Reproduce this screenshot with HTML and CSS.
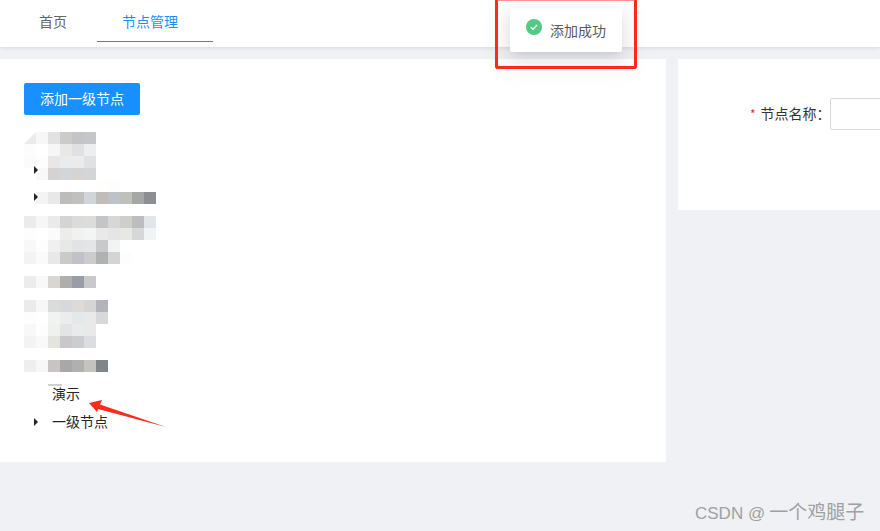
FILE: index.html
```html
<html>
  <head>
    <title>节点管理</title>
    <link rel="stylesheet" href="styles.css">
  </head>

  <body>
    <div class="nav">
      <a class="tab">首页</a>
      <a class="tab active">节点管理</a>
    </div>

    <div class="main">
      <div class="panel tree-panel">
        <button class="add-btn">添加一级节点</button>

        <div class="tree">
          <div id="mosaic" class="mosaic">
            <i class="corner-cut"></i>
            <i class="caret caret-one"></i>
            <i class="caret caret-two"></i>
          </div>
          <div class="node first-node">
            <i class="sliver"></i>
            演示
          </div>
          <div class="node">
            <i class="caret caret-node"></i>
            一级节点
          </div>
        </div>
      </div>

      <div class="panel form-panel">
        <label class="form-label"><span class="star">*</span>节点名称：</label>
        <input class="form-input" type="text">
      </div>
    </div>

    <div class="toast">
      <svg class="toast-icon" viewBox="0 0 16 16">
        <circle cx="8" cy="8" r="8" fill="#52c985"></circle>
        <path d="M4.8 8.2 7 10.3 11.2 5.9" fill="none" stroke="#fff" stroke-width="1.3"></path>
      </svg>
      <span class="toast-text">添加成功</span>
    </div>

    <!-- hand drawn marks on the screenshot -->
    <div class="red-box"></div>
    <svg class="red-arrow" viewBox="0 0 880 531">
      <polygon points="89,403 102,400 100,404.5 166,427 98,409 97,412" fill="#ff2a1a"></polygon>
    </svg>

    <div class="watermark">CSDN @<span class="watermark-name">一个鸡腿子</span></div>

    <script src="mosaic.js"></script>
  </body>
</html>
```

FILE: styles.css
```css
* {
  box-sizing: border-box;
}

html, body {
  height: 100%;
}

body {
  margin: 0;
  overflow: hidden;
  background: #f0f1f5;
  font-family: "Noto Sans CJK SC", sans-serif;
  font-size: 14px;
  color: #333;
}

.nav {
  height: 47px;
  padding-left: 9px;
  display: flex;
  background: #fff;
  box-shadow: 0 1px 4px rgba(0, 0, 0, 0.1);
}

.tab {
  height: 42px;
  padding: 0 30px;
  line-height: 43px;
  color: #666;
}

.tab.active {
  padding: 0 35px 0 25px;
  color: #1890ff;
  border-bottom: 1px solid #1890ff;
}

.main {
  margin-top: 12px;
  display: flex;
  align-items: flex-start;
  gap: 12px;
}

.panel {
  background: #fff;
}

.tree-panel {
  width: 666px;
  height: 403px;
  padding: 24px 24px 0;
}

.add-btn {
  display: block;
  width: 116px;
  height: 32px;
  padding: 0 0 2px;
  border: 0;
  border-radius: 2px;
  background: #1890ff;
  color: #fff;
  font-family: inherit;
  font-size: 14px;
}

.tree {
  margin-top: 17px;
}

.mosaic {
  position: relative;
  margin-bottom: 8px;
}

.mosaic-row {
  display: flex;
  height: 12px;
}

.mosaic-row span {
  width: 12px;
}

.corner-cut {
  position: absolute;
  left: 0;
  top: 0;
  width: 12px;
  height: 12px;
  background: #fff;
  clip-path: polygon(0 0, 100% 0, 0 100%);
}

.caret {
  position: absolute;
  width: 0;
  height: 0;
  border-style: solid;
  border-width: 4px 0 4px 4px;
  border-color: transparent transparent transparent #222;
}

.caret-one {
  left: 10px;
  top: 34px;
}

.caret-two {
  left: 10px;
  top: 61px;
}

.caret-node {
  left: -18px;
  top: 10px;
}

.node {
  position: relative;
  height: 28px;
  margin-left: 28px;
  line-height: 26px;
  color: #262626;
}

.sliver {
  position: absolute;
  left: -4px;
  top: 4px;
  width: 14px;
  height: 2px;
  background: #cfcfcf;
}

.form-panel {
  flex: 1;
  height: 151px;
  padding: 39px 0 0 72px;
  display: flex;
  align-items: flex-start;
  overflow: hidden;
}

.form-label {
  flex: none;
  width: 80px;
  line-height: 30px;
  white-space: nowrap;
}

.star {
  margin-right: 5px;
  color: #f5222d;
  font-size: 12px;
}

.form-input {
  flex: none;
  width: 200px;
  height: 32px;
  border: 1px solid #d9d9d9;
  border-radius: 2px;
  background: #fff;
}

.toast {
  position: absolute;
  left: 510px;
  top: 8px;
  width: 112px;
  height: 44px;
  border-radius: 2px;
  background: #fff;
  box-shadow: 0 3px 6px -4px rgba(0, 0, 0, 0.12), 0 6px 16px 0 rgba(0, 0, 0, 0.08), 0 9px 28px 8px rgba(0, 0, 0, 0.05);
}

.toast-icon {
  position: absolute;
  left: 16px;
  top: 11px;
  width: 16px;
  height: 16px;
}

.toast-text {
  position: absolute;
  left: 40px;
  top: 12px;
  line-height: 20px;
  color: #595959;
}

.red-box {
  position: absolute;
  left: 495px;
  top: -2px;
  width: 142px;
  height: 71px;
  border: 3px solid #ff2a1a;
  border-top-color: rgba(255, 42, 26, 0.5);
  border-radius: 3px;
}

.red-arrow {
  position: absolute;
  left: 0;
  top: 0;
  width: 880px;
  height: 531px;
  pointer-events: none;
}

.watermark {
  position: absolute;
  left: 695px;
  top: 498px;
  line-height: 26px;
  font-family: "Liberation Sans", "Noto Sans CJK SC", sans-serif;
  font-size: 17px;
  color: #a0a0a0;
  white-space: nowrap;
}

.watermark-name {
  margin-left: 4px;
  font-family: "Noto Sans CJK SC", sans-serif;
  font-size: 19px;
}
```

FILE: mosaic.js
```js
// Blurred tree rows, one list of colours for each 12px strip.
const rows = [
  ['ebebeb', 'f7f7f7', 'e2e2e2', 'cbcbc9', 'c4c4c6', 'c4c7ca'],
  ['fcfcfc', 'ffffff', 'f6f6f6', 'e8e8e6', 'e0e0e3', 'ecefee'],
  ['fbfbfb', 'fdfdfd', 'e8e6e6', 'e9ebee', 'ecebec', 'e0e1e3'],
  ['ffffff', 'f8f8f8', 'd5d2d2', 'd2d6d8', 'd5d4d3', 'd2d6d7'],
  ['ffffff', 'ffffff', 'ffffff', 'ffffff', 'ffffff', 'ffffff', 'fefefd', 'fdfdfd'],
  ['ffffff', 'f4f4f4', 'e9e8e9', 'bcbcbb', 'c0c0be', 'd0d5da', 'c0bcba', 'bdc1c8', 'bfbfbb', 'a4a7a6', '8d8e92'],
  [],
  ['ebebeb', 'f6f6f6', 'eaeaea', 'd4d4d4', 'dcdbdc', 'dcdcdb', 'c4c5c7', 'd7d7d8', 'cfcecb', 'bcbdbe', 'e2e6ea'],
  ['fdfdfd', 'ffffff', 'fbfbfb', 'ececea', 'f1f1f1', 'f3f5f5', 'e9e9e9', 'e5e5e6', 'e7e7e6', 'd6d7d7', 'f1f3f5'],
  ['f8f8f8', 'fdfdfd', 'f0f0f0', 'e8e8e8', 'e2e3e4', 'e4e5e6', 'c8c9cb', 'f2f4f4'],
  ['f3f3f3', 'fafafa', 'e8e8e8', 'cacac8', 'c0c2c8', 'cccccd', 'b0b2b2', 'd4d4d2', 'fcfdfc'],
  [],
  ['ececec', 'f8f8f8', 'd9d6d2', 'aeaeac', '9a9ca6', 'c9c9cb'],
  [],
  ['ebebeb', 'f7f7f7', 'dbdbdb', 'd6d8dc', 'dcdbd7', 'd5d5d5', 'b3b3ba'],
  ['fdfdfd', 'ffffff', 'f0f3f2', 'ebecee', 'e5e8e8', 'e9e9ea', 'd7d8da'],
  ['f8f8f8', 'fdfdfd', 'f0f0ef', 'e4e3e5', 'e9eaea', 'e9e9ea'],
  ['f3f3f3', 'f9f9f9', 'e3e4de', 'cbc6cc', 'cccdcf', 'dcdde1'],
  [],
  ['eeeeee', 'f7f7f7', 'c8c4c4', 'a8a8a8', 'b0b0b0', 'c4c3bf', '808589'],
];

const $mosaic = document.getElementById('mosaic');

rows.forEach((colors) => {
  const $row = document.createElement('div');
  $row.className = 'mosaic-row';
  colors.forEach((color) => {
    const $cell = document.createElement('span');
    $cell.style.background = '#' + color;
    $row.appendChild($cell);
  });
  $mosaic.appendChild($row);
});
```
